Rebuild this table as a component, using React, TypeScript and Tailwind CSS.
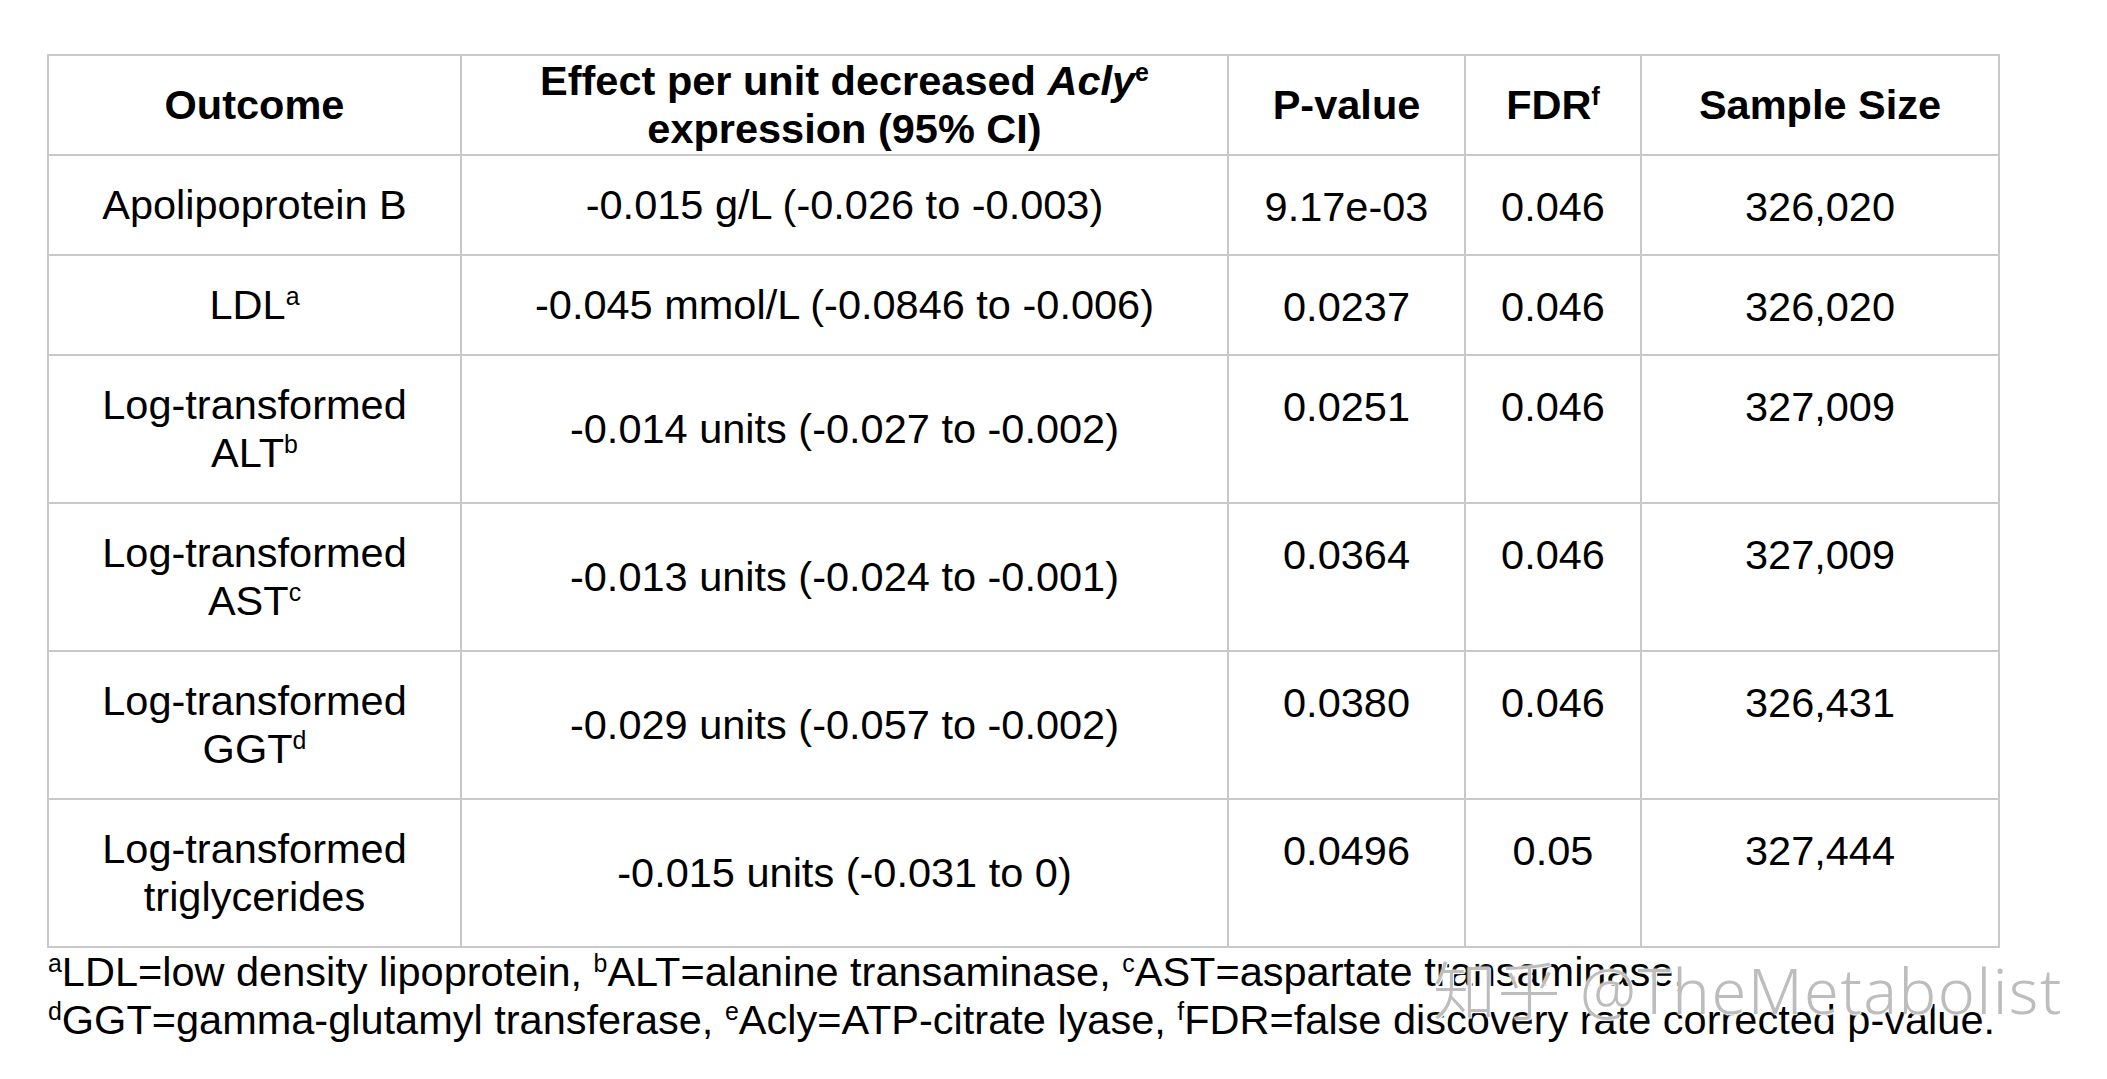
const rows = [
  { outcome: ["Apolipoprotein B"], sup: "", effect: "-0.015 g/L (-0.026 to -0.003)", p: "9.17e-03", fdr: "0.046", n: "326,020", tall: false },
  { outcome: ["LDL"], sup: "a", effect: "-0.045 mmol/L (-0.0846 to -0.006)", p: "0.0237", fdr: "0.046", n: "326,020", tall: false },
  { outcome: ["Log-transformed", "ALT"], sup: "b", effect: "-0.014 units (-0.027 to -0.002)", p: "0.0251", fdr: "0.046", n: "327,009", tall: true },
  { outcome: ["Log-transformed", "AST"], sup: "c", effect: "-0.013 units (-0.024 to -0.001)", p: "0.0364", fdr: "0.046", n: "327,009", tall: true },
  { outcome: ["Log-transformed", "GGT"], sup: "d", effect: "-0.029 units (-0.057 to -0.002)", p: "0.0380", fdr: "0.046", n: "326,431", tall: true },
  { outcome: ["Log-transformed", "triglycerides"], sup: "", effect: "-0.015 units (-0.031 to 0)", p: "0.0496", fdr: "0.05", n: "327,444", tall: true },
]

function Sup({ children }: { children: React.ReactNode }) {
  return <span className="relative top-[-0.56em] text-[0.6em] leading-none align-baseline">{children}</span>
}

export default function App() {
  const cell = "border-2 border-[#c8c8c8] text-center px-2"
  return (
    <div className="relative min-h-[1079px] w-[2107px] bg-white pl-[47px] pt-[54px] text-black font-['Liberation_Sans',Arial,sans-serif] text-[41.5px] leading-[48px]">
      <table className="table-fixed border-collapse w-[1951px]">
        <colgroup>
          <col className="w-[413px]" />
          <col className="w-[767px]" />
          <col className="w-[237px]" />
          <col className="w-[176px]" />
          <col className="w-[358px]" />
        </colgroup>
        <thead>
          <tr className="h-[100px] font-bold">
            <th className={`${cell} align-middle`}>Outcome</th>
            <th className={`${cell} align-middle`}>
              Effect per unit decreased <i>Acly</i><Sup>e</Sup>
              <br />
              expression (95% CI)
            </th>
            <th className={`${cell} align-middle`}>P-value</th>
            <th className={`${cell} align-middle`}>FDR<Sup>f</Sup></th>
            <th className={`${cell} align-middle`}>Sample Size</th>
          </tr>
        </thead>
        <tbody>
          {rows.map((r, i) => (
            <tr key={i} className={r.tall ? "h-[148px]" : "h-[100px]"}>
              <td className={`${cell} align-middle`}>
                {r.outcome.map((line, j) => (
                  <div key={j}>
                    {line}
                    {j === r.outcome.length - 1 && r.sup && <Sup>{r.sup}</Sup>}
                  </div>
                ))}
              </td>
              <td className={`${cell} align-middle`}>{r.effect}</td>
              <td className={`${cell} align-top pt-[27px]`}>{r.p}</td>
              <td className={`${cell} align-top pt-[27px]`}>{r.fdr}</td>
              <td className={`${cell} align-top pt-[27px]`}>{r.n}</td>
            </tr>
          ))}
        </tbody>
      </table>
      <div className="pl-[1px]">
        <p>
          <Sup>a</Sup>LDL=low density lipoprotein, <Sup>b</Sup>ALT=alanine transaminase, <Sup>c</Sup>AST=aspartate transaminase,
        </p>
        <p>
          <Sup>d</Sup>GGT=gamma-glutamyl transferase, <Sup>e</Sup>Acly=ATP-citrate lyase, <Sup>f</Sup>FDR=false discovery rate corrected p-value.
        </p>
      </div>
      {/* zhihu watermark */}
      <div className="absolute left-[1433px] top-[958px] whitespace-nowrap font-['Noto_Sans','Noto_Sans_CJK_SC',sans-serif] font-light text-[63px] leading-none tracking-[1.5px] text-[#bdbdbd] [text-shadow:0_0_2px_#fff,0_0_2px_#fff,1px_1px_1px_#fff]">
        知乎 @TheMetabolist
      </div>
    </div>
  )
}
